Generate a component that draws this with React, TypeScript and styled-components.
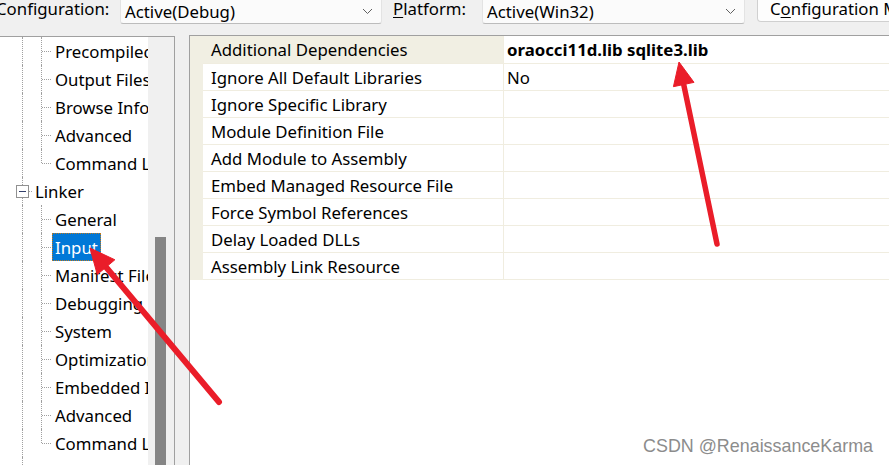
import * as React from 'react';
import styled, { createGlobalStyle } from 'styled-components';

const GlobalStyle = createGlobalStyle`
  html, body {
    margin: 0;
    padding: 0;
    background: #f0f0f0;
  }
  * {
    box-sizing: border-box;
  }
`;

const Page = styled.div`
  position: relative;
  width: 889px;
  height: 465px;
  overflow: hidden;
  background: #f0f0f0;
  display: flex;
  flex-direction: column;
  font-family: 'Noto Sans', 'Open Sans', sans-serif;
  font-size: 16.8px;
  color: #000;
`;

const Toolbar = styled.div`
  display: flex;
  align-items: flex-start;
  height: 35px;
  flex-shrink: 0;
  margin-left: -4px;
`;

const Label = styled.span<{ $width: number; $gap?: number }>`
  width: ${({ $width }) => $width}px;
  margin-left: ${({ $gap }) => $gap ?? 0}px;
  line-height: 18px;
  white-space: nowrap;
  u {
    text-decoration-thickness: 1px;
    text-underline-offset: 2px;
  }
`;

const Combo = styled.div<{ $width: number }>`
  display: flex;
  align-items: center;
  justify-content: space-between;
  width: ${({ $width }) => $width}px;
  height: 25px;
  margin-top: -1px;
  padding: 0 8px 0 4px;
  background: #fbfbfb;
  border: 1px solid #e3e3e3;
  border-bottom-color: #bcbcbc;
  border-radius: 0 0 3px 3px;
  white-space: nowrap;
`;

const Chevron = () => (
  <svg width="11" height="7" viewBox="0 0 11 7">
    <path d="M1 1 L5.5 5.5 L10 1" fill="none" stroke="#606060" strokeWidth="1" />
  </svg>
);

const Button = styled.div`
  margin-left: 12px;
  margin-top: -1px;
  height: 23px;
  padding: 0 0 0 12px;
  flex: 1;
  margin-right: -60px;
  background: #fdfdfd;
  border: 1px solid #d0d0d0;
  border-top: none;
  border-radius: 0 0 0 4px;
  line-height: 20px;
  white-space: nowrap;
  overflow: hidden;
  u {
    text-decoration-thickness: 1px;
    text-underline-offset: 2px;
  }
`;

const Body = styled.div`
  display: flex;
  gap: 14px;
  flex: 1;
  min-height: 0;
`;

const TreePanel = styled.div`
  display: flex;
  width: 176px;
  flex-shrink: 0;
  margin-top: 1px;
  margin-left: -1px;
  background: #fff;
  border: 1px solid #a0a0a0;
  border-bottom: none;
`;

const TreeList = styled.div`
  width: 148px;
  overflow: hidden;
`;

const TreeRow = styled.div`
  display: flex;
  align-items: center;
  height: 28px;
  white-space: nowrap;
`;

const Rail = styled.div`
  position: relative;
  width: 23px;
  height: 100%;
  flex-shrink: 0;
  border-right: 1px dotted #a0a0a0;
`;

const Expander = styled.div`
  position: absolute;
  z-index: 1;
  left: 16px;
  top: 8px;
  width: 13px;
  height: 13px;
  background: #fff;
  border: 1px solid #919191;
  &::after {
    content: '';
    position: absolute;
    left: 2px;
    right: 2px;
    top: 5px;
    height: 1px;
    background: #33406b;
  }
`;

const Stub = styled.div<{ $width: number }>`
  width: ${({ $width }) => $width}px;
  height: 1px;
  flex-shrink: 0;
  border-top: 1px dotted #a0a0a0;
`;

const Branch = styled.div<{ $last?: boolean }>`
  position: relative;
  width: 29px;
  height: 100%;
  flex-shrink: 0;
  &::before {
    content: '';
    position: absolute;
    left: 18px;
    top: 0;
    bottom: ${({ $last }) => ($last ? '50%' : '0')};
    border-left: 1px dotted #a0a0a0;
  }
  &::after {
    content: '';
    position: absolute;
    left: 19px;
    width: 9px;
    top: 50%;
    border-top: 1px dotted #a0a0a0;
  }
`;

const NodeText = styled.span<{ $selected?: boolean }>`
  padding: 0 2px;
  height: 28px;
  line-height: 27px;
  border: 1px dotted ${({ $selected }) => ($selected ? '#c07a1f' : 'transparent')};
  background: ${({ $selected }) => ($selected ? '#0078d7' : 'transparent')};
  color: ${({ $selected }) => ($selected ? '#fff' : '#000')};
`;

const ScrollTrack = styled.div`
  width: 26px;
  flex-shrink: 0;
  background: #f0f0f0;
  padding: 200px 0 0 7px;
`;

const Thumb = styled.div`
  width: 11px;
  height: 100%;
  background: #858585;
`;

const GridPanel = styled.div`
  flex: 1;
  margin-right: -40px;
  background: #fff;
  border: 1px solid #a0a0a0;
  border-bottom: none;
  border-right: none;
`;

const GridRow = styled.div<{ $first?: boolean }>`
  display: flex;
  height: ${({ $first }) => ($first ? 28 : 27)}px;
  background: #f1efe3;
  padding-left: 13px;
`;

const NameCell = styled.div<{ $active?: boolean }>`
  width: 301px;
  flex-shrink: 0;
  padding: 1px 0 0 8px;
  line-height: 25px;
  background: ${({ $active }) => ($active ? '#f1efe3' : '#fff')};
  border-right: 1px solid #f0ede0;
  border-bottom: 1px solid #f0ede0;
  white-space: nowrap;
`;

const ValueCell = styled.div<{ $bold?: boolean }>`
  flex: 1;
  padding: 1px 0 0 3px;
  line-height: 25px;
  background: #fff;
  border-bottom: 1px solid #f0ede0;
  font-weight: ${({ $bold }) => ($bold ? 700 : 400)};
  white-space: nowrap;
`;

const Overlay = styled.svg`
  position: absolute;
  left: 0;
  top: 0;
  pointer-events: none;
`;

const Watermark = styled.div`
  position: absolute;
  right: 16px;
  bottom: 8px;
  font-family: 'Liberation Sans', Arial, sans-serif;
  font-size: 17.9px;
  color: #8c8c8c;
  text-shadow: 0 0 1px #fff;
`;

type Node = { label: string; level: 1 | 2; last?: boolean; selected?: boolean };

const tree: Node[] = [
  { label: 'Precompiled Header', level: 2 },
  { label: 'Output Files', level: 2 },
  { label: 'Browse Information', level: 2 },
  { label: 'Advanced', level: 2 },
  { label: 'Command Line', level: 2, last: true },
  { label: 'Linker', level: 1 },
  { label: 'General', level: 2 },
  { label: 'Input', level: 2, selected: true },
  { label: 'Manifest File', level: 2 },
  { label: 'Debugging', level: 2 },
  { label: 'System', level: 2 },
  { label: 'Optimization', level: 2 },
  { label: 'Embedded IDL', level: 2 },
  { label: 'Advanced', level: 2 },
  { label: 'Command Line', level: 2, last: true },
  { label: 'Manifest Tool', level: 1 },
];

const properties: { name: string; value?: string }[] = [
  { name: 'Additional Dependencies', value: 'oraocci11d.lib sqlite3.lib' },
  { name: 'Ignore All Default Libraries', value: 'No' },
  { name: 'Ignore Specific Library' },
  { name: 'Module Definition File' },
  { name: 'Add Module to Assembly' },
  { name: 'Embed Managed Resource File' },
  { name: 'Force Symbol References' },
  { name: 'Delay Loaded DLLs' },
  { name: 'Assembly Link Resource' },
];

function Arrow({ from, to, width, head, half }: { from: [number, number]; to: [number, number]; width: number; head: number; half: number }) {
  const dx = to[0] - from[0];
  const dy = to[1] - from[1];
  const len = Math.hypot(dx, dy);
  const ux = dx / len;
  const uy = dy / len;
  const px = -uy;
  const py = ux;
  const bx = to[0] - ux * head;
  const by = to[1] - uy * head;
  const pts = [
    [to[0], to[1]],
    [bx + px * half, by + py * half],
    [bx - px * half, by - py * half],
  ]
    .map((p) => p.join(','))
    .join(' ');
  return (
    <g fill="#ea1d29" stroke="#ea1d29">
      <line x1={from[0]} y1={from[1]} x2={bx + ux * 2} y2={by + uy * 2} strokeWidth={width} strokeLinecap="round" />
      <polygon points={pts} strokeWidth={1} strokeLinejoin="round" />
    </g>
  );
}

export default function App() {
  return (
    <>
      <GlobalStyle />
      <Page>
        <Toolbar>
          <Label $width={124}>Configuration:</Label>
          <Combo $width={262}>
            <span>Active(Debug)</span>
            <Chevron />
          </Combo>
          <Label $width={89} $gap={11}>
            <u>P</u>latform:
          </Label>
          <Combo $width={263}>
            <span>Active(Win32)</span>
            <Chevron />
          </Combo>
          <Button>
            C<u>o</u>nfiguration Manager...
          </Button>
        </Toolbar>
        <Body>
          <TreePanel>
            <TreeList>
              {tree.map((n, i) =>
                n.level === 1 ? (
                  <TreeRow key={i}>
                    <Rail>
                      <Expander />
                    </Rail>
                    <Stub $width={9} />
                    <NodeText>{n.label}</NodeText>
                  </TreeRow>
                ) : (
                  <TreeRow key={i}>
                    <Rail />
                    <Branch $last={n.last} />
                    <NodeText $selected={n.selected}>{n.label}</NodeText>
                  </TreeRow>
                )
              )}
            </TreeList>
            <ScrollTrack>
              <Thumb />
            </ScrollTrack>
          </TreePanel>
          <GridPanel>
            {properties.map((p, i) => (
              <GridRow key={p.name} $first={i === 0}>
                <NameCell $active={i === 0}>{p.name}</NameCell>
                <ValueCell $bold={i === 0}>{p.value}</ValueCell>
              </GridRow>
            ))}
          </GridPanel>
        </Body>
        <Overlay width={889} height={465}>
          <Arrow from={[219, 402]} to={[90, 248]} width={6} head={25} half={11.5} />
          <Arrow from={[717, 244]} to={[679, 62]} width={5.5} head={23} half={10.5} />
        </Overlay>
        <Watermark>CSDN @RenaissanceKarma</Watermark>
      </Page>
    </>
  );
}
